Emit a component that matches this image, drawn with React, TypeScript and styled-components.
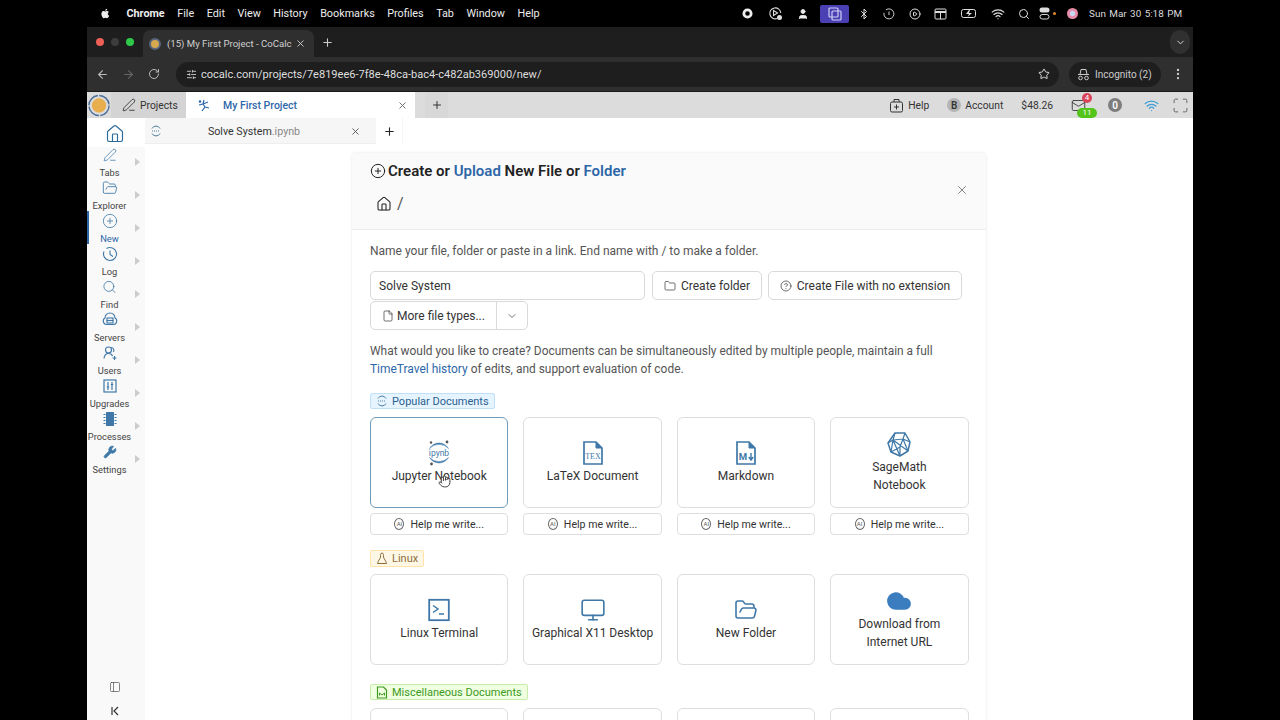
import React from "react";
import styled, { createGlobalStyle } from "styled-components";
import {
  ArrowLeft, ArrowRight, RotateCw, Star, X, Plus, ChevronDown, EllipsisVertical, SlidersHorizontal,
  Home, PenLine, FolderOpen, CirclePlus, Search, Wrench, Folder, CircleHelp, File, CirclePlay,
  Monitor, Wifi, Bluetooth, Search as Lens, PanelLeft, User, Mail, Cloud, Maximize, Hand,
} from "lucide-react";

const Global = createGlobalStyle`
  html, body { margin: 0; padding: 0; background: #000; width: 1280px; height: 720px; overflow: hidden; }
  body { font-family: Roboto, "Liberation Sans", sans-serif; }
  #root { width: 1280px; height: 720px; overflow: hidden; }
  * { box-sizing: border-box; }
`;

const Screen = styled.div`display: flex; flex-direction: column; width: 1280px; height: 720px; background: #000;`;

const MenuBar = styled.div`
  height: 27px; display: flex; align-items: center; justify-content: space-between;
  padding: 0 98px 0 100px; color: #eee; font-size: 10.8px; flex: none;
`;
const MenuLeft = styled.div`display: flex; align-items: center; gap: 12.5px;`;
const MenuApp = styled.span`font-weight: 700; margin-left: 3px;`;
const MenuRight = styled.div`display: flex; align-items: center; gap: 0;`;
const TrayIcon = styled.span<{ $w?: number }>`
  width: ${p => p.$w ?? 27}px; height: 18px; display: flex; align-items: center; justify-content: center; color: #ddd;
`;
const TrayActive = styled(TrayIcon)`background: #4b3fb4; border-radius: 2px; margin: 0 4px 0 3.5px;`;
const Clocktext = styled.span`margin-left: 2px; color: #ddd; font-size: 9.9px; word-spacing: 1px; white-space: nowrap;`;

const Win = styled.div`margin-left: 87px; width: 1106px; flex: 1; display: flex; flex-direction: column; min-height: 0; background: #fff;`;

const TabStrip = styled.div`height: 30px; background: #1e1e1f; display: flex; align-items: flex-end; padding-left: 9px; flex: none; color: #ddd;`;
const Lights = styled.div`display: flex; gap: 7px; align-self: center; width: 47px; margin-top: -1px;`;
const Light = styled.span<{ $c: string }>`width: 8px; height: 8px; border-radius: 50%; background: ${p => p.$c};`;
const BrowserTab = styled.div`
  width: 171px; height: 27px; background: #2f2f30; border-radius: 8px 8px 0 0; display: flex; align-items: center;
  padding: 0 8px 0 6px; font-size: 9.6px; color: #cfcfcf; white-space: nowrap;
`;
const Favicon = styled.span`width: 12px; height: 12px; border-radius: 50%; background: #d6a850; border: 2px solid #58657a; margin-right: 6px; flex: none;`;
const TabTitle = styled.span`flex: 1;`;
const NewBrowserTab = styled.span`margin-left: 7px; display: flex; align-self: center; color: #ccc;`;
const StripEnd = styled.span`margin-left: auto; margin-right: 3px; margin-bottom: 3px; width: 20px; height: 24px; border-radius: 10px; background: #303031; display: flex; align-items: center; justify-content: center;`;

const AddressBar = styled.div`
  height: 35px; background: #2f2f30; display: flex; align-items: center; padding-left: 9px; flex: none; color: #bbb;
  border-bottom: 1px solid #1a1a1a;
`;
const NavBtn = styled.span<{ $dim?: boolean }>`width: 26px; display: flex; color: ${p => p.$dim ? "#666" : "#bbb"};`;
const UrlPill = styled.div`
  width: 883px; height: 25px; margin-left: 2px; background: #1e1e1f; border-radius: 13px; display: flex; align-items: center;
  padding: 0 9px 0 5px; color: #ddd; font-size: 11.06px;
`;
const SiteBtn = styled.span`width: 20px; display: flex; justify-content: center; color: #ccc;`;
const UrlText = styled.span`flex: 1;`;
const Incognito = styled.div`
  width: 92px; height: 25px; margin-left: 10px; border-radius: 13px; background: #1e1e1f; display: flex; align-items: center; gap: 5.5px;
  padding-left: 7.5px; font-size: 10px; color: #ccc; white-space: nowrap;
`;
const MoreBtn = styled.span`margin-left: 10px; display: flex; color: #ccc;`;

const AppBar = styled.div`height: 26px; background: #dcdcdc; display: flex; align-items: stretch; flex: none;`;
const Logo = styled.svg`width: 24px; height: 25px; flex: none; align-self: center;`;
const ProjectsTab = styled.div`width: 75px; display: flex; align-items: center; gap: 4px; padding-left: 11px; font-size: 10.3px; color: #333; background: #d4d4d4;`;
const ProjectTab = styled.div`width: 229px; background: #fff; display: flex; align-items: center; padding: 1px 7px 0 11px; color: #2e67a8; font-size: 10.5px; font-weight: 500;`;
const ProjectName = styled.span`flex: 1; margin-left: 12px;`;
const AddTab = styled.div`width: 23px; margin-left: 10px; background: #d8d8d8; color: #333; display: flex; align-items: center; justify-content: center;`;
const AppRight = styled.div`margin-left: auto; display: flex; align-items: center; font-size: 10.3px; color: #333; padding-right: 4px;`;
const BarItem = styled.span<{ $ml?: number; $gap?: number }>`display: flex; align-items: center; gap: ${p => p.$gap ?? 4}px; margin-left: ${p => p.$ml ?? 0}px; position: relative;`;
const Avatar = styled.span<{ $size: number; $bg: string; $fg: string }>`
  width: ${p => p.$size}px; height: ${p => p.$size}px; border-radius: 50%; background: ${p => p.$bg}; color: ${p => p.$fg};
  display: flex; align-items: center; justify-content: center; font-size: 10px; font-weight: 600;
`;
const Badge = styled.span<{ $bg: string; $w: number; $top: number; $left: number }>`
  position: absolute; top: ${p => p.$top}px; left: ${p => p.$left}px; width: ${p => p.$w}px; height: 10px; border-radius: 5px;
  background: ${p => p.$bg}; color: #fff; font-size: 8px; line-height: 10px; text-align: center;
`;

const Body = styled.div`flex: 1; min-height: 0; display: flex;`;
const Sidebar = styled.nav`width: 58px; flex: none; display: flex; flex-direction: column; background: #f9f9f9; position: relative;`;
const HomeCell = styled.div`height: 29px; background: #fff; display: flex; align-items: center; justify-content: center; padding: 2px 2px 0 0; color: #2c6a99; flex: none;`;
const SideItem = styled.div<{ $active?: boolean }>`
  height: 33px; position: relative; display: flex; flex-direction: column; align-items: center; width: 45px;
  color: ${p => p.$active ? "#2e67a8" : "#444"}; font-size: 9.3px; line-height: 11px; white-space: nowrap;
  & > svg { color: #3f78a8; flex: none; height: 16px; margin-bottom: 4px; }
  &::after {
    content: ""; position: absolute; left: 48px; top: 11px; border-left: 5px solid #ccc; border-top: 4px solid transparent; border-bottom: 4px solid transparent;
  }
`;
const SideLabel = styled.span`display: block; width: 45px; text-align: center;`;
const ActiveBar = styled.span`position: absolute; left: 0; top: 93px; width: 2px; height: 33px; background: #2e67a8;`;
const SideBottom = styled.div`margin-top: auto; display: flex; flex-direction: column; align-items: center; gap: 12px; padding: 0 0 3px 0; color: #444; width: 56px;`;

const Main = styled.main`flex: 1; min-width: 0; display: flex; flex-direction: column; overflow: hidden;`;
const FileTabs = styled.div`height: 26px; flex: none; display: flex;`;
const FileTab = styled.div`width: 230px; background: #f6f6f6; display: flex; align-items: center; padding: 1px 14px 0 5px; font-size: 10.7px; color: #333; border-bottom: 1px solid #eee;`;
const FileName = styled.span`flex: 1; text-align: center; padding-right: 4px;`;
const FileExt = styled.span`color: #888;`;
const FilePlus = styled.div`width: 28px; padding-top: 1px; display: flex; align-items: center; justify-content: center; color: #222; border-left: 1px solid #f5f5f5; border-right: 1px solid #f5f5f5;`;

const Panel = styled.section`width: 634px; margin: 9px auto 0; flex: none; background: #fff; box-shadow: 0 0 3px rgba(0,0,0,.1); border-radius: 3px 3px 0 0;`;
const PanelHead = styled.header`height: 77px; background: #fafafa; border-bottom: 1px solid #eee; display: flex; align-items: center; justify-content: space-between; padding: 0 17px 0 18px;`;
const HeadCol = styled.div`display: flex; flex-direction: column; gap: 14px; margin-top: -6px;`;
const Title = styled.h1`margin: 0; font-size: 15px; font-weight: 600; color: #222; display: flex; align-items: center; gap: 2px; line-height: 18px; white-space: pre;`;
const TitleLink = styled.span`color: #2e67a8;`;
const Crumb = styled.div`display: flex; align-items: center; gap: 5px; padding-left: 6px; color: #555; font-size: 16px; line-height: 20px;`;
const CloseHead = styled.span`display: flex; margin-top: -2px; color: #444;`;
const PanelBody = styled.div`padding: 12px 17px 0 18px; font-size: 12px; color: #555;`;
const Hint = styled.p`margin: 0; line-height: 18px;`;
const Row = styled.div`display: flex; margin-top: 11px;`;
const NameInput = styled.div`width: 275px; height: 29px; border: 1px solid #d9d9d9; border-radius: 5px; padding: 0 8px; display: flex; align-items: center; color: #333;`;
const Btn = styled.div<{ $w: number; $ml: number }>`
  width: ${p => p.$w}px; margin-left: ${p => p.$ml}px; height: 29px; border: 1px solid #d9d9d9; border-radius: 5px; display: flex; align-items: center; justify-content: center; gap: 5px;
  color: #333; white-space: nowrap;
`;
const Split = styled.div`display: flex; margin-top: 1px; width: 158px; height: 29px; border: 1px solid #d9d9d9; border-radius: 5px; color: #333;`;
const SplitMain = styled.div`width: 126px; display: flex; align-items: center; justify-content: center; gap: 3px; border-right: 1px solid #d9d9d9; white-space: nowrap;`;
const SplitChev = styled.div`flex: 1; display: flex; align-items: center; justify-content: center;`;
const Intro = styled.p`margin: 12px 0 0; font-size: 11.95px; line-height: 18px; color: #555; white-space: nowrap;`;
const IntroLink = styled.span`color: #2e67a8;`;
const Tag = styled.div<{ $fg: string; $bg: string; $bd: string; $mt: number; $h: number }>`
  display: flex; width: fit-content; align-items: center; gap: 4px; height: ${p => p.$h}px; padding: 0 5px; margin-top: ${p => p.$mt}px; border-radius: 2px;
  font-size: 11px; color: ${p => p.$fg}; background: ${p => p.$bg}; border: 1px solid ${p => p.$bd};
`;
const Grid = styled.div<{ $mt: number }>`display: grid; grid-template-columns: repeat(4, 138.4px); column-gap: 15px; row-gap: 5px; margin-top: ${p => p.$mt}px;`;
const Card = styled.div<{ $hover?: boolean }>`
  height: 91px; border: 1px solid ${p => p.$hover ? "#6f9cb8" : "#dedede"}; border-radius: 6px; display: flex; flex-direction: column; align-items: center; justify-content: center;
  color: #333; font-size: 12px; line-height: 18px; text-align: center; position: relative; gap: 2px;
`;
const CardIcon = styled.span`display: flex; height: 24px; align-items: center; justify-content: center; color: #3f78a8;`;
const Cursor = styled.span`position: absolute; left: 67px; top: 57px; color: #222; display: flex;`;
const HelpBtn = styled.div`height: 22px; border: 1px solid #dedede; border-radius: 4px; display: flex; align-items: center; justify-content: center; gap: 6px; color: #333; font-size: 10.6px;`;
const AiMark = styled.span`width: 10px; height: 12px; border: 1px solid #666; border-radius: 50%; font-size: 6px; line-height: 10px; text-align: center; color: #555;`;

const Blue = "#3f78a8";

const JupyterIcon = () => (
  <svg width="26" height="26" viewBox="0 0 26 26">
    <path d="M3.500 8.500a11 11 0 0 1 19 0a13 13 0 0 0-19 0Z" fill={Blue} stroke={Blue} strokeWidth=".5" />
    <path d="M3.500 17.500a11 11 0 0 0 19 0a13 13 0 0 1-19 0Z" fill={Blue} stroke={Blue} strokeWidth=".5" />
    <circle cx="5" cy="2.500" r="1.200" fill="#555" /><circle cx="21" cy="2" r="1.400" fill="#555" /><circle cx="5.500" cy="24" r="1.400" fill="#555" />
    <text x="13" y="15.500" fontSize="8.500" textAnchor="middle" fill={Blue} fontFamily="Roboto, sans-serif">ipynb</text>
  </svg>
);
const DocIcon = ({ children }: { children: React.ReactNode }) => (
  <svg width="22" height="24" viewBox="0 0 22 24" fill="none">
    <path d="M2 1h12l6 6v16H2Z" stroke={Blue} strokeWidth="1.700" />
    <path d="M14 1v6h6" fill={Blue} stroke={Blue} />
    {children}
  </svg>
);
const SageIcon = () => (
  <svg width="24" height="26" viewBox="0 0 24 26" fill="none" stroke={Blue} strokeWidth="1.200" strokeLinejoin="round">
    <path d="M8 2 18 2 23 11 21 20 13 25 4 21 1 12Z" strokeWidth="1.500" />
    <path d="M8 2 6 9 1 12M6 9 16 8 18 2M16 8 23 11M16 8 21 20M6 9 13 25M6 9 4 21M6 9 21 20M16 8 13 16 4 21M13 16 13 25" />
  </svg>
);
const TerminalIcon = () => (
  <svg width="22" height="24" viewBox="0 0 22 24" fill="none" stroke={Blue}>
    <rect x="1.200" y="1.800" width="19.600" height="20.400" strokeWidth="1.800" />
    <path d="M5 7.500 10 11 5 14.500" strokeWidth="1.500" /><path d="M11 16h5" strokeWidth="1.500" />
  </svg>
);
const TagNotebook = () => (
  <svg width="12" height="12" viewBox="0 0 12 12" fill="none" stroke="#4d7f9e" strokeWidth="1">
    <path d="M2 3.500a4.500 4.500 0 0 1 8 0M2 8.500a4.500 4.500 0 0 0 8 0" /><path d="M2 6h8" strokeDasharray="1 1" />
  </svg>
);
const Tux = () => (
  <svg width="12" height="13" viewBox="0 0 12 13" fill="none" stroke="#8a6d3b" strokeWidth="1">
    <path d="M6 1C4.500 1 4.500 3 4.500 5 4 7 2 9 1.500 11.500h9C10 9 8 7 7.500 5 7.500 3 7.500 1 6 1Z" />
  </svg>
);
const TagFile = () => (
  <svg width="12" height="13" viewBox="0 0 12 13" fill="none" stroke="#3d9a1f" strokeWidth="1.200">
    <path d="M1.500 1h6l3 3v8h-9Z" /><path d="M3.500 9.500V7L6 9l2.500-2v2.500" strokeWidth="1" />
  </svg>
);
const ProjectIcon = () => (
  <svg width="14" height="14" viewBox="0 0 14 14" fill="none" stroke="#2e67a8" strokeWidth="1.200">
    <path d="M7 1 6 5 2 6M6 5 8 8 5 12M8 8l4 1M6 5l5-2" /><circle cx="3" cy="2.500" r=".7" fill="#2e67a8" />
  </svg>
);
const ServerIcon = () => (
  <svg width="16" height="16" viewBox="0 0 16 16" fill="none" stroke={Blue} strokeWidth="1.100">
    <path d="M4.500 12.500A3.500 3.500 0 0 1 3 6a5 5 0 0 1 10 0 3.500 3.500 0 0 1-1.500 6.500Z" />
    <rect x="5" y="6" width="6" height="2.500" /><rect x="5" y="8.500" width="6" height="2.500" />
  </svg>
);
const UsersIcon = () => (
  <svg width="16" height="16" viewBox="0 0 16 16" fill="none" stroke={Blue} strokeWidth="1.100">
    <circle cx="6.500" cy="5" r="3" /><path d="M2 13.500c.3-3 2-5 4.500-5s3.500 1 4 2.500" />
    <path d="M9 2.500a3 3 0 0 1 2.500 4.500M12.500 11v4M10.500 13h4" />
  </svg>
);
const LogIcon = () => (
  <svg width="16" height="16" viewBox="0 0 16 16" fill="none" stroke={Blue} strokeWidth="1.100">
    <path d="M4.500 2.500a6.500 6.500 0 1 1-2.500 3" /><path d="M8 4.500V8.500l3 2" />
  </svg>
);
const UpgradesIcon = () => (
  <svg width="16" height="16" viewBox="0 0 16 16" fill="none" stroke={Blue} strokeWidth="1.200">
    <rect x="2" y="2" width="12" height="12" /><path d="M6 4v8M10 4v8" /><path d="M4.800 9h2.400M8.800 6.500h2.400" />
  </svg>
);
const ChipIcon = () => (
  <svg width="16" height="16" viewBox="0 0 16 16" fill={Blue}>
    <rect x="4" y="1" width="8" height="14" rx=".5" />
    <path d="M1.500 3h2v1h-2zM1.500 6h2v1h-2zM1.500 9h2v1h-2zM1.500 12h2v1h-2zM12.500 3h2v1h-2zM12.500 6h2v1h-2zM12.500 9h2v1h-2zM12.500 12h2v1h-2z" />
  </svg>
);

type SideDef = { label: string; icon: React.ReactNode; active?: boolean };
const sideItems: SideDef[] = [
  { label: "Tabs", icon: <PenLine size={14} strokeWidth={1.3} /> },
  { label: "Explorer", icon: <FolderOpen size={16} strokeWidth={1.3} /> },
  { label: "New", icon: <CirclePlus size={16} strokeWidth={1.2} />, active: true },
  { label: "Log", icon: <LogIcon /> },
  { label: "Find", icon: <Search size={15} strokeWidth={1.3} /> },
  { label: "Servers", icon: <ServerIcon /> },
  { label: "Users", icon: <UsersIcon /> },
  { label: "Upgrades", icon: <UpgradesIcon /> },
  { label: "Processes", icon: <ChipIcon /> },
  { label: "Settings", icon: <Wrench size={14} strokeWidth={1.5} fill={Blue} /> },
];

const Help = () => (
  <HelpBtn><AiMark>AI</AiMark>Help me write...</HelpBtn>
);

function ProjectsArea() {
  return (
    <>
      <Logo viewBox="0 0 25 25">
        <circle cx="12.500" cy="12.500" r="7.500" fill="#e8ae4e" />
        <circle cx="12.500" cy="12.500" r="10.500" fill="none" stroke="#4d6f99" strokeWidth="1.500" strokeDasharray="15 1.500" />
      </Logo>
      <ProjectsTab>
        <PenLine size={14} strokeWidth={1.5} />Projects
      </ProjectsTab>
    </>
  );
}

export default function App() {
  return (
    <Screen>
      <Global />
      <MenuBar>
        <MenuLeft>
          <svg width="11" height="13" viewBox="0 0 24 24" fill="#eee"><path d="M17.050 12.500c0-2.600 2.100-3.800 2.200-3.900-1.200-1.800-3.100-2-3.800-2-1.600-.2-3.100.9-3.900.9s-2.100-.9-3.400-.9C6.400 6.600 4.800 7.600 3.900 9.100c-1.900 3.200-.5 8 1.300 10.600.9 1.300 1.900 2.700 3.300 2.700 1.300-.1 1.800-.9 3.400-.9s2 .9 3.400.8c1.400 0 2.300-1.300 3.200-2.600 1-1.500 1.400-2.900 1.400-3-.1 0-2.800-1.100-2.900-4.200ZM14.500 4.700c.7-.9 1.200-2.100 1.100-3.300-1 0-2.300.7-3 1.500-.7.800-1.300 2-1.100 3.200 1.100.1 2.300-.6 3-1.400Z" /></svg>
          <MenuApp>Chrome</MenuApp>
          <span>File</span><span>Edit</span><span>View</span><span>History</span><span>Bookmarks</span><span>Profiles</span><span>Tab</span><span>Window</span><span>Help</span>
        </MenuLeft>
        <MenuRight>
          <TrayIcon><svg width="11" height="11" viewBox="0 0 12 12"><circle cx="6" cy="6" r="4" fill="none" stroke="#eee" strokeWidth="3" /></svg></TrayIcon>
          <TrayIcon $w={29}><svg width="15" height="15" viewBox="0 0 15 15" fill="none" stroke="#ddd" strokeWidth="1.100"><path d="M9 12.600A5.500 5.500 0 1 1 12.800 7" /><path d="M5.500 4.500 9.500 7 5.500 9.500Z" /><circle cx="11.500" cy="11.500" r="2.500" fill="#ddd" stroke="none" /></svg></TrayIcon>
          <TrayIcon><User size={12} fill="#eee" /></TrayIcon>
          <TrayActive $w={29}><svg width="14" height="14" viewBox="0 0 14 14" fill="none" stroke="#cfd0f5" strokeWidth="1.200"><rect x="1" y="1" width="9" height="9" rx="1" /><rect x="4" y="4" width="9" height="9" rx="1" /></svg></TrayActive>
          <TrayIcon $w={22}><Bluetooth size={12} /></TrayIcon>
          <TrayIcon $w={28}><svg width="12" height="12" viewBox="0 0 12 12" fill="none" stroke="#ccc"><path d="M3 1.800a5 5 0 1 1-2 3" /><path d="M6 3.500V7" /></svg></TrayIcon>
          <TrayIcon $w={24}><CirclePlay size={12} /></TrayIcon>
          <TrayIcon $w={26}><svg width="13" height="12" viewBox="0 0 13 12" fill="none" stroke="#ddd"><rect x="1" y="1" width="11" height="10" rx="1" /><path d="M1 4h11" strokeWidth="2" /><path d="M6.500 4v7" /></svg></TrayIcon>
          <TrayIcon $w={32}><svg width="17" height="9" viewBox="0 0 17 9"><rect x=".5" y=".5" width="14" height="8" rx="2" fill="none" stroke="#ddd" /><path d="M8 1 5 5h3L6.500 8 11 4H8l1-3Z" fill="#ddd" /></svg></TrayIcon>
          <TrayIcon $w={26}><Wifi size={14} /></TrayIcon>
          <TrayIcon $w={26}><Lens size={12} /></TrayIcon>
          <TrayIcon $w={14}><svg width="11" height="13" viewBox="0 0 11 13"><rect x=".5" y=".5" width="10" height="5" rx="2.500" fill="#ddd" /><rect x="1" y="7.500" width="9" height="4.500" rx="2.200" fill="none" stroke="#ddd" /></svg></TrayIcon>
          <TrayIcon $w={6}><svg width="3" height="3" viewBox="0 0 3 3"><circle cx="1.500" cy="1.500" r="1.500" fill="#e08a2c" /></svg></TrayIcon>
          <TrayIcon $w={30}><svg width="11" height="13" viewBox="0 0 11 13"><circle cx="5.500" cy="6.500" r="5.500" fill="#e88aa8" /><circle cx="5.500" cy="6.500" r="2.700" fill="#c9d6ef" /></svg></TrayIcon>
          <Clocktext>Sun Mar 30 5:18 PM</Clocktext>
        </MenuRight>
      </MenuBar>
      <Win>
        <TabStrip>
          <Lights><Light $c="#ec5f57" /><Light $c="#3d3d3d" /><Light $c="#2fc94a" /></Lights>
          <BrowserTab>
            <Favicon /><TabTitle>(15) My First Project - CoCalc</TabTitle><X size={11} />
          </BrowserTab>
          <NewBrowserTab><Plus size={13} /></NewBrowserTab>
          <StripEnd><ChevronDown size={11} /></StripEnd>
        </TabStrip>
        <AddressBar>
          <NavBtn><ArrowLeft size={13} /></NavBtn>
          <NavBtn $dim><ArrowRight size={13} /></NavBtn>
          <NavBtn><RotateCw size={12} /></NavBtn>
          <UrlPill>
            <SiteBtn><SlidersHorizontal size={11} /></SiteBtn>
            <UrlText>cocalc.com/projects/7e819ee6-7f8e-48ca-bac4-c482ab369000/new/</UrlText>
            <Star size={12} />
          </UrlPill>
          <Incognito>
            <svg width="13" height="13" viewBox="0 0 13 13" fill="none" stroke="#ccc"><path d="M1 6.500h11M3 6.500 4 1.500h5l1 5" /><circle cx="3.500" cy="10" r="1.800" /><circle cx="9.500" cy="10" r="1.800" /></svg>
            Incognito (2)
          </Incognito>
          <MoreBtn><EllipsisVertical size={14} /></MoreBtn>
        </AddressBar>
        <AppBar>
          <ProjectsArea />
          <ProjectTab>
            <ProjectIcon /><ProjectName>My First Project</ProjectName><X size={11} color="#666" />
          </ProjectTab>
          <AddTab><Plus size={12} /></AddTab>
          <AppRight>
            <BarItem $gap={4}>
              <svg width="15" height="15" viewBox="0 0 15 15" fill="none" stroke="#333"><rect x="1.500" y="4" width="12" height="10" rx="1.500" /><path d="M5 4V1.500h5V4M7.500 6.500v5M5 9h5" /></svg>
              Help
            </BarItem>
            <BarItem $ml={18}><Avatar $size={14} $bg="#b4b4b4" $fg="#333">B</Avatar>Account</BarItem>
            <BarItem $ml={18}>$48.26</BarItem>
            <BarItem $ml={18}>
              <Mail size={15} strokeWidth={1.4} />
              <Badge $bg="#d9435a" $w={10} $top={-5} $left={11}>4</Badge>
              <Badge $bg="#52c41a" $w={20} $top={10} $left={6}>11</Badge>
            </BarItem>
            <BarItem $ml={22}><Avatar $size={14} $bg="#7d7d7d" $fg="#fff">0</Avatar></BarItem>
            <BarItem $ml={22}><Wifi size={15} color="#3e9fd8" /></BarItem>
            <BarItem $ml={13}><Maximize size={17} strokeWidth={1.2} color="#555" /></BarItem>
          </AppRight>
        </AppBar>
        <Body>
          <Sidebar>
            <HomeCell><Home size={20} strokeWidth={1.4} /></HomeCell>
            {sideItems.map(s => (
              <SideItem key={s.label} $active={s.active}>
                {s.icon}
                <SideLabel>{s.label}</SideLabel>
              </SideItem>
            ))}
            <ActiveBar />
            <SideBottom>
              <PanelLeft size={12} strokeWidth={1.3} />
              <svg width="12" height="12" viewBox="0 0 12 12" fill="none" stroke="#333" strokeWidth="1.200"><path d="M3 2v8M9 2 5 6l4 4" /></svg>
            </SideBottom>
          </Sidebar>
          <Main>
            <FileTabs>
              <FileTab>
                <TagNotebook />
                <FileName>Solve System<FileExt>.ipynb</FileExt></FileName>
                <X size={11} color="#555" />
              </FileTab>
              <FilePlus><Plus size={13} /></FilePlus>
            </FileTabs>
            <Panel>
              <PanelHead>
                <HeadCol>
                  <Title>
                    <CirclePlus size={16} strokeWidth={1.5} color="#222" />
                    <span>Create or <TitleLink>Upload</TitleLink> New File or <TitleLink>Folder</TitleLink></span>
                  </Title>
                  <Crumb><Home size={16} strokeWidth={1.6} color="#222" />/</Crumb>
                </HeadCol>
                <CloseHead><X size={14} strokeWidth={1.1} /></CloseHead>
              </PanelHead>
              <PanelBody>
                <Hint>Name your file, folder or paste in a link. End name with / to make a folder.</Hint>
                <Row>
                  <NameInput>Solve System</NameInput>
                  <Btn $w={110} $ml={7}><Folder size={12} strokeWidth={1.4} />Create folder</Btn>
                  <Btn $w={194} $ml={6}><CircleHelp size={12} strokeWidth={1.4} />Create File with no extension</Btn>
                </Row>
                <Split>
                  <SplitMain><File size={12} strokeWidth={1.4} />More file types...</SplitMain>
                  <SplitChev><ChevronDown size={12} strokeWidth={1.4} /></SplitChev>
                </Split>
                <Intro>What would you like to create? Documents can be simultaneously edited by multiple people, maintain a full<br /><IntroLink>TimeTravel history</IntroLink> of edits, and support evaluation of code.</Intro>
                <Tag $fg="#2a5f8f" $bg="#e6f4ff" $bd="#bfe0f7" $mt={15} $h={16}><TagNotebook />Popular Documents</Tag>
                <Grid $mt={8}>
                  <Card $hover>
                    <CardIcon><JupyterIcon /></CardIcon>Jupyter Notebook
                    <Cursor><Hand size={13} strokeWidth={1.6} fill="#fff" /></Cursor>
                  </Card>
                  <Card><CardIcon><DocIcon><text x="11" y="18" fontSize="8" textAnchor="middle" fill={Blue} fontFamily="Liberation Serif, serif">TEX</text></DocIcon></CardIcon>LaTeX Document</Card>
                  <Card>
                    <CardIcon>
                      <DocIcon>
                        <text x="8" y="19" fontSize="9.500" fontWeight="700" textAnchor="middle" fill={Blue} fontFamily="Roboto, sans-serif">M</text>
                        <path d="M16 12v6M13.800 16l2.200 3 2.200-3" stroke={Blue} strokeWidth="1.400" />
                      </DocIcon>
                    </CardIcon>Markdown
                  </Card>
                  <Card><CardIcon><SageIcon /></CardIcon>SageMath<br />Notebook</Card>
                  <Help /><Help /><Help /><Help />
                </Grid>
                <Tag $fg="#8a6d3b" $bg="#fff7e6" $bd="#ffe3a8" $mt={15} $h={17}><Tux />Linux</Tag>
                <Grid $mt={7}>
                  <Card><CardIcon><TerminalIcon /></CardIcon>Linux Terminal</Card>
                  <Card><CardIcon><Monitor size={26} strokeWidth={1.5} /></CardIcon>Graphical X11 Desktop</Card>
                  <Card><CardIcon><FolderOpen size={24} strokeWidth={1.6} /></CardIcon>New Folder</Card>
                  <Card><CardIcon><Cloud size={26} fill="#3b7dbf" color="#3b7dbf" /></CardIcon>Download from<br />Internet URL</Card>
                </Grid>
                <Tag $fg="#3d9a1f" $bg="#f0ffe0" $bd="#c6edaa" $mt={19} $h={16}><TagFile />Miscellaneous Documents</Tag>
                <Grid $mt={8}>
                  <Card /><Card /><Card /><Card />
                </Grid>
              </PanelBody>
            </Panel>
          </Main>
        </Body>
      </Win>
    </Screen>
  );
}
